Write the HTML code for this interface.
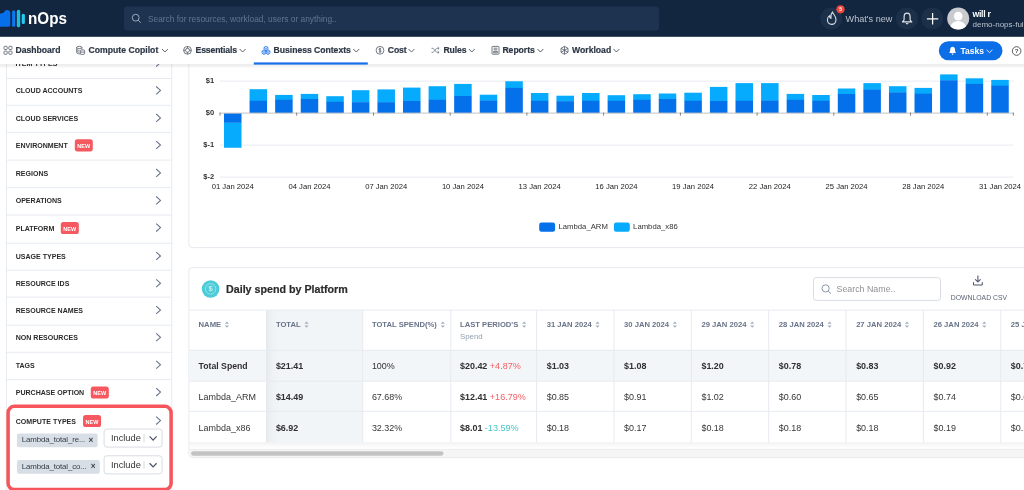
<!DOCTYPE html>
<html lang="en"><head><meta charset="utf-8"><title>nOps - Business Contexts</title>
<style>
*{box-sizing:border-box;margin:0;padding:0}
html,body{width:1024px;height:490px;overflow:hidden;background:#fff;font-family:"Liberation Sans",sans-serif;}
#root{will-change:transform;position:relative;width:1024px;height:490px;overflow:hidden;background:#fff}
#shapes{position:absolute;left:0;top:0}
.t{position:absolute;white-space:nowrap}
</style></head>
<body><div id="root">
<svg id="shapes" width="1024" height="490" viewBox="0 0 1024 490">
<rect x="5.9" y="60" width="1" height="430" fill="#e6eaef"/>
<rect x="171.3" y="60" width="1" height="430" fill="#e6eaef"/>
<rect x="6.4" y="78" width="165.4" height="1" fill="#e6eaef"/>
<path d="M0 -3.9 L4.3 0 L0 3.9" fill="none" stroke="#66738b" stroke-width="1.05" transform="translate(156.2 62.6)"/>
<rect x="6.4" y="104.8" width="165.4" height="1" fill="#e6eaef"/>
<path d="M0 -3.9 L4.3 0 L0 3.9" fill="none" stroke="#66738b" stroke-width="1.05" transform="translate(156.2 90.4)"/>
<rect x="6.4" y="131.8" width="165.4" height="1" fill="#e6eaef"/>
<path d="M0 -3.9 L4.3 0 L0 3.9" fill="none" stroke="#66738b" stroke-width="1.05" transform="translate(156.2 117.9)"/>
<rect x="6.4" y="159.6" width="165.4" height="1" fill="#e6eaef"/>
<path d="M0 -3.9 L4.3 0 L0 3.9" fill="none" stroke="#66738b" stroke-width="1.05" transform="translate(156.2 145)"/>
<rect x="74.8" y="139.3" width="18" height="12.1" fill="#f5595f" rx="2.6"/>
<rect x="6.4" y="187.2" width="165.4" height="1" fill="#e6eaef"/>
<path d="M0 -3.9 L4.3 0 L0 3.9" fill="none" stroke="#66738b" stroke-width="1.05" transform="translate(156.2 172.9)"/>
<rect x="6.4" y="214.5" width="165.4" height="1" fill="#e6eaef"/>
<path d="M0 -3.9 L4.3 0 L0 3.9" fill="none" stroke="#66738b" stroke-width="1.05" transform="translate(156.2 200.4)"/>
<rect x="6.4" y="242.7" width="165.4" height="1" fill="#e6eaef"/>
<path d="M0 -3.9 L4.3 0 L0 3.9" fill="none" stroke="#66738b" stroke-width="1.05" transform="translate(156.2 227.6)"/>
<rect x="60.8" y="221.9" width="18" height="12.1" fill="#f5595f" rx="2.6"/>
<rect x="6.4" y="269.7" width="165.4" height="1" fill="#e6eaef"/>
<path d="M0 -3.9 L4.3 0 L0 3.9" fill="none" stroke="#66738b" stroke-width="1.05" transform="translate(156.2 256)"/>
<rect x="6.4" y="296.6" width="165.4" height="1" fill="#e6eaef"/>
<path d="M0 -3.9 L4.3 0 L0 3.9" fill="none" stroke="#66738b" stroke-width="1.05" transform="translate(156.2 283.2)"/>
<rect x="6.4" y="324.7" width="165.4" height="1" fill="#e6eaef"/>
<path d="M0 -3.9 L4.3 0 L0 3.9" fill="none" stroke="#66738b" stroke-width="1.05" transform="translate(156.2 310)"/>
<rect x="6.4" y="351.8" width="165.4" height="1" fill="#e6eaef"/>
<path d="M0 -3.9 L4.3 0 L0 3.9" fill="none" stroke="#66738b" stroke-width="1.05" transform="translate(156.2 337.3)"/>
<rect x="6.4" y="379.1" width="165.4" height="1" fill="#e6eaef"/>
<path d="M0 -3.9 L4.3 0 L0 3.9" fill="none" stroke="#66738b" stroke-width="1.05" transform="translate(156.2 364.8)"/>
<path d="M0 -3.9 L4.3 0 L0 3.9" fill="none" stroke="#66738b" stroke-width="1.05" transform="translate(156.2 392.1)"/>
<rect x="90.8" y="386.4" width="18" height="12.1" fill="#f5595f" rx="2.6"/>
<path d="M0 -3.9 L4.3 0 L0 3.9" fill="none" stroke="#66738b" stroke-width="1.05" transform="translate(156.2 420.6)"/>
<rect x="83.05" y="414.9" width="18" height="12.1" fill="#f5595f" rx="2.6"/>
<rect x="8.1" y="406.35" width="163" height="83.2" fill="none" rx="6.3" stroke="#f5555b" stroke-width="3.5"/>
<rect x="17" y="433.4" width="80.6" height="13.8" fill="#d8dee6" rx="2"/>
<rect x="104.1" y="429" width="58" height="18.1" fill="#fff" rx="2.8" stroke="#d8dce3" stroke-width="1"/>
<rect x="143.55" y="434" width="0.9" height="8.1" fill="#d4d4d4"/>
<path d="M-3.5 -1.9 L0 1.7 L3.5 -1.9" fill="none" stroke="#4a5262" stroke-width="1.2" transform="translate(153.1 438.35)"/>
<rect x="17" y="460" width="82.8" height="13.8" fill="#d8dee6" rx="2"/>
<rect x="104.1" y="455.8" width="58" height="18.1" fill="#fff" rx="2.8" stroke="#d8dce3" stroke-width="1"/>
<rect x="143.55" y="460.8" width="0.9" height="8.1" fill="#d4d4d4"/>
<path d="M-3.5 -1.9 L0 1.7 L3.5 -1.9" fill="none" stroke="#4a5262" stroke-width="1.2" transform="translate(153.1 465.15)"/>
<rect x="188.9" y="50" width="900" height="197.6" fill="#fff" rx="3.5" stroke="#e6eaef" stroke-width="1"/>
<rect x="220" y="80.6" width="793.4" height="1" fill="#e9ecf4"/>
<rect x="220" y="144.6" width="793.4" height="1" fill="#e9ecf4"/>
<rect x="220" y="176.6" width="793.4" height="1" fill="#e9ecf4"/>
<rect x="224" y="122.4" width="17.5" height="25.35" fill="#06abfd"/>
<rect x="224" y="113.1" width="17.5" height="9.6" fill="#0470e9"/>
<rect x="249.57" y="89.2" width="17.5" height="11.9" fill="#06abfd"/>
<rect x="249.57" y="100.8" width="17.5" height="12.3" fill="#0470e9"/>
<rect x="275.15" y="94.9" width="17.5" height="5.2" fill="#06abfd"/>
<rect x="275.15" y="99.8" width="17.5" height="13.3" fill="#0470e9"/>
<rect x="300.73" y="93.9" width="17.5" height="5.4" fill="#06abfd"/>
<rect x="300.73" y="99" width="17.5" height="14.1" fill="#0470e9"/>
<rect x="326.3" y="96.2" width="17.5" height="5.9" fill="#06abfd"/>
<rect x="326.3" y="101.8" width="17.5" height="11.3" fill="#0470e9"/>
<rect x="351.88" y="90.2" width="17.5" height="12.3" fill="#06abfd"/>
<rect x="351.88" y="102.2" width="17.5" height="10.9" fill="#0470e9"/>
<rect x="377.45" y="89.4" width="17.5" height="13.1" fill="#06abfd"/>
<rect x="377.45" y="102.2" width="17.5" height="10.9" fill="#0470e9"/>
<rect x="403.02" y="87.6" width="17.5" height="13.7" fill="#06abfd"/>
<rect x="403.02" y="101" width="17.5" height="12.1" fill="#0470e9"/>
<rect x="428.6" y="86.2" width="17.5" height="13.9" fill="#06abfd"/>
<rect x="428.6" y="99.8" width="17.5" height="13.3" fill="#0470e9"/>
<rect x="454.17" y="83.9" width="17.5" height="12.4" fill="#06abfd"/>
<rect x="454.17" y="96" width="17.5" height="17.1" fill="#0470e9"/>
<rect x="479.75" y="94.7" width="17.5" height="6.1" fill="#06abfd"/>
<rect x="479.75" y="100.5" width="17.5" height="12.6" fill="#0470e9"/>
<rect x="505.32" y="81.25" width="17.5" height="6.95" fill="#06abfd"/>
<rect x="505.32" y="87.9" width="17.5" height="25.2" fill="#0470e9"/>
<rect x="530.9" y="93" width="17.5" height="8.1" fill="#06abfd"/>
<rect x="530.9" y="100.8" width="17.5" height="12.3" fill="#0470e9"/>
<rect x="556.47" y="95.7" width="17.5" height="5.8" fill="#06abfd"/>
<rect x="556.47" y="101.2" width="17.5" height="11.9" fill="#0470e9"/>
<rect x="582.05" y="93" width="17.5" height="8" fill="#06abfd"/>
<rect x="582.05" y="100.7" width="17.5" height="12.4" fill="#0470e9"/>
<rect x="607.62" y="95.2" width="17.5" height="5.9" fill="#06abfd"/>
<rect x="607.62" y="100.8" width="17.5" height="12.3" fill="#0470e9"/>
<rect x="633.2" y="94.2" width="17.5" height="5.9" fill="#06abfd"/>
<rect x="633.2" y="99.8" width="17.5" height="13.3" fill="#0470e9"/>
<rect x="658.77" y="93.5" width="17.5" height="5.8" fill="#06abfd"/>
<rect x="658.77" y="99" width="17.5" height="14.1" fill="#0470e9"/>
<rect x="684.35" y="92.7" width="17.5" height="8.4" fill="#06abfd"/>
<rect x="684.35" y="100.8" width="17.5" height="12.3" fill="#0470e9"/>
<rect x="709.92" y="86.9" width="17.5" height="14.4" fill="#06abfd"/>
<rect x="709.92" y="101" width="17.5" height="12.1" fill="#0470e9"/>
<rect x="735.5" y="83.1" width="17.5" height="18" fill="#06abfd"/>
<rect x="735.5" y="100.8" width="17.5" height="12.3" fill="#0470e9"/>
<rect x="761.07" y="83.1" width="17.5" height="17.7" fill="#06abfd"/>
<rect x="761.07" y="100.5" width="17.5" height="12.6" fill="#0470e9"/>
<rect x="786.65" y="93.9" width="17.5" height="6.2" fill="#06abfd"/>
<rect x="786.65" y="99.8" width="17.5" height="13.3" fill="#0470e9"/>
<rect x="812.23" y="95" width="17.5" height="6.1" fill="#06abfd"/>
<rect x="812.23" y="100.8" width="17.5" height="12.3" fill="#0470e9"/>
<rect x="837.8" y="88.5" width="17.5" height="5.8" fill="#06abfd"/>
<rect x="837.8" y="94" width="17.5" height="19.1" fill="#0470e9"/>
<rect x="863.38" y="83.1" width="17.5" height="6.8" fill="#06abfd"/>
<rect x="863.38" y="89.6" width="17.5" height="23.5" fill="#0470e9"/>
<rect x="888.95" y="86.2" width="17.5" height="6.5" fill="#06abfd"/>
<rect x="888.95" y="92.4" width="17.5" height="20.7" fill="#0470e9"/>
<rect x="914.52" y="87.9" width="17.5" height="6.1" fill="#06abfd"/>
<rect x="914.52" y="93.7" width="17.5" height="19.4" fill="#0470e9"/>
<rect x="940.1" y="74.4" width="17.5" height="6.2" fill="#06abfd"/>
<rect x="940.1" y="80.3" width="17.5" height="32.8" fill="#0470e9"/>
<rect x="965.67" y="78.3" width="17.5" height="5.9" fill="#06abfd"/>
<rect x="965.67" y="83.9" width="17.5" height="29.2" fill="#0470e9"/>
<rect x="991.25" y="79.9" width="17.5" height="6.1" fill="#06abfd"/>
<rect x="991.25" y="85.7" width="17.5" height="27.4" fill="#0470e9"/>
<rect x="219.6" y="112.6" width="794" height="1" fill="#c4c4c4"/>
<rect x="219.55" y="112.6" width="0.9" height="3.1" fill="#777"/>
<rect x="296.28" y="112.6" width="0.9" height="3.1" fill="#777"/>
<rect x="373" y="112.6" width="0.9" height="3.1" fill="#777"/>
<rect x="449.72" y="112.6" width="0.9" height="3.1" fill="#777"/>
<rect x="526.45" y="112.6" width="0.9" height="3.1" fill="#777"/>
<rect x="603.17" y="112.6" width="0.9" height="3.1" fill="#777"/>
<rect x="679.9" y="112.6" width="0.9" height="3.1" fill="#777"/>
<rect x="756.62" y="112.6" width="0.9" height="3.1" fill="#777"/>
<rect x="833.35" y="112.6" width="0.9" height="3.1" fill="#777"/>
<rect x="910.07" y="112.6" width="0.9" height="3.1" fill="#777"/>
<rect x="986.8" y="112.6" width="0.9" height="3.1" fill="#777"/>
<rect x="1012.85" y="112.6" width="0.9" height="3.1" fill="#777"/>
<rect x="539.2" y="222.5" width="15.9" height="9.2" fill="#0470e9" rx="2.3"/>
<rect x="613.9" y="222.5" width="15.9" height="9.2" fill="#06abfd" rx="2.3"/>
<rect x="188.9" y="267.6" width="900" height="190" fill="#fff" rx="3.5" stroke="#e6eaef" stroke-width="1"/>
<circle cx="210.6" cy="289" r="8.8" fill="#4ccbd9"/>
<circle cx="210.6" cy="288.9" r="5.2" fill="none" stroke="#fff" stroke-width="0.7" opacity="0.6"/>
<rect x="813.5" y="277.6" width="127" height="22.8" fill="#fff" rx="2.8" stroke="#d8dce2" stroke-width="1"/>
<g transform="translate(821.3 284.1)" fill="none" stroke="#8490a3" stroke-width="0.95"><circle cx="4.3" cy="4.3" r="3.6"/><path d="M6.9 6.9 L9.6 9.6"/></g>
<g transform="translate(972.9 275.3)" fill="none" stroke="#4a5568" stroke-width="1.05" stroke-linecap="round" stroke-linejoin="round"><path d="M5 0.6 V6.6 M2.6 4.3 L5 6.7 L7.4 4.3 M0.6 7.2 V9.2 Q0.6 9.8 1.2 9.8 H8.8 Q9.4 9.8 9.4 9.2 V7.2"/></g>
<rect x="189.4" y="350.3" width="900" height="30.9" fill="#f3f6f9"/>
<defs><linearGradient id="tg" x1="0" x2="1" y1="0" y2="0"><stop offset="0" stop-color="#e4e8ec"/><stop offset="0.03" stop-color="#eaedf1"/><stop offset="0.08" stop-color="#f0f3f6"/><stop offset="0.14" stop-color="#f2f5f8"/><stop offset="1" stop-color="#f2f5f8"/></linearGradient></defs>
<rect x="266" y="310.1" width="96.7" height="132.1" fill="url(#tg)"/>
<rect x="189.4" y="309.6" width="910.6" height="1" fill="#e6eaef"/>
<rect x="189.4" y="349.8" width="910.6" height="1" fill="#e6eaef"/>
<rect x="189.4" y="380.7" width="910.6" height="1" fill="#e6eaef"/>
<rect x="189.4" y="410.8" width="910.6" height="1" fill="#e6eaef"/>
<rect x="362.2" y="310.1" width="1" height="132.1" fill="#e6eaef"/>
<rect x="450.3" y="310.1" width="1" height="132.1" fill="#e6eaef"/>
<rect x="536.1" y="310.1" width="1" height="132.1" fill="#e6eaef"/>
<rect x="613.46" y="310.1" width="1" height="132.1" fill="#e6eaef"/>
<rect x="690.82" y="310.1" width="1" height="132.1" fill="#e6eaef"/>
<rect x="768.18" y="310.1" width="1" height="132.1" fill="#e6eaef"/>
<rect x="845.54" y="310.1" width="1" height="132.1" fill="#e6eaef"/>
<rect x="922.9" y="310.1" width="1" height="132.1" fill="#e6eaef"/>
<rect x="1000.26" y="310.1" width="1" height="132.1" fill="#e6eaef"/>
<rect x="1077.62" y="310.1" width="1" height="132.1" fill="#e6eaef"/>
<path d="M0 -0.8 L2.1 -3.1 L4.2 -0.8 Z M0 0.8 L2.1 3.1 L4.2 0.8 Z" fill="#a6afbe" transform="translate(224.8 324.6)"/>
<path d="M0 -0.8 L2.1 -3.1 L4.2 -0.8 Z M0 0.8 L2.1 3.1 L4.2 0.8 Z" fill="#a6afbe" transform="translate(304.4 324.6)"/>
<path d="M0 -0.8 L2.1 -3.1 L4.2 -0.8 Z M0 0.8 L2.1 3.1 L4.2 0.8 Z" fill="#a6afbe" transform="translate(440.7 324.6)"/>
<path d="M0 -0.8 L2.1 -3.1 L4.2 -0.8 Z M0 0.8 L2.1 3.1 L4.2 0.8 Z" fill="#a6afbe" transform="translate(522.1 324.6)"/>
<path d="M0 -0.8 L2.1 -3.1 L4.2 -0.8 Z M0 0.8 L2.1 3.1 L4.2 0.8 Z" fill="#a6afbe" transform="translate(595.4 324.6)"/>
<path d="M0 -0.8 L2.1 -3.1 L4.2 -0.8 Z M0 0.8 L2.1 3.1 L4.2 0.8 Z" fill="#a6afbe" transform="translate(672.76 324.6)"/>
<path d="M0 -0.8 L2.1 -3.1 L4.2 -0.8 Z M0 0.8 L2.1 3.1 L4.2 0.8 Z" fill="#a6afbe" transform="translate(750.12 324.6)"/>
<path d="M0 -0.8 L2.1 -3.1 L4.2 -0.8 Z M0 0.8 L2.1 3.1 L4.2 0.8 Z" fill="#a6afbe" transform="translate(827.48 324.6)"/>
<path d="M0 -0.8 L2.1 -3.1 L4.2 -0.8 Z M0 0.8 L2.1 3.1 L4.2 0.8 Z" fill="#a6afbe" transform="translate(904.84 324.6)"/>
<path d="M0 -0.8 L2.1 -3.1 L4.2 -0.8 Z M0 0.8 L2.1 3.1 L4.2 0.8 Z" fill="#a6afbe" transform="translate(982.2 324.6)"/>
<path d="M0 -0.8 L2.1 -3.1 L4.2 -0.8 Z M0 0.8 L2.1 3.1 L4.2 0.8 Z" fill="#a6afbe" transform="translate(1059.56 324.6)"/>
<defs><linearGradient id="bs" x1="0" x2="0" y1="0" y2="1"><stop offset="0" stop-color="#000" stop-opacity="0.05"/><stop offset="1" stop-color="#000" stop-opacity="0"/></linearGradient></defs>
<rect x="189.4" y="442.2" width="900" height="6.2" fill="url(#bs)"/>
<rect x="189.4" y="449.4" width="900" height="7.7" fill="#f5f5f5"/>
<rect x="189.4" y="448.9" width="910.6" height="1" fill="#ececec"/>
<rect x="191.1" y="451.2" width="252.3" height="4.5" fill="#c3c3c3" rx="2.25"/>
<defs><linearGradient id="ns" x1="0" x2="0" y1="0" y2="1"><stop offset="0" stop-color="#000" stop-opacity="0.09"/><stop offset="1" stop-color="#000" stop-opacity="0"/></linearGradient></defs>
<rect x="0" y="64.1" width="1024" height="4.5" fill="url(#ns)"/>
<rect x="0" y="37" width="1024" height="27.1" fill="#fff"/>
<path d="M0 0 L2.95 3 L5.9 0" fill="none" stroke="#4a5260" stroke-width="0.9" transform="translate(161.95 49)"/>
<path d="M0 0 L2.95 3 L5.9 0" fill="none" stroke="#4a5260" stroke-width="0.9" transform="translate(239.65 49)"/>
<path d="M0 0 L2.95 3 L5.9 0" fill="none" stroke="#4a5260" stroke-width="0.9" transform="translate(353.35 49)"/>
<path d="M0 0 L2.95 3 L5.9 0" fill="none" stroke="#4a5260" stroke-width="0.9" transform="translate(408.55 49)"/>
<path d="M0 0 L2.95 3 L5.9 0" fill="none" stroke="#4a5260" stroke-width="0.9" transform="translate(468.85 49)"/>
<path d="M0 0 L2.95 3 L5.9 0" fill="none" stroke="#4a5260" stroke-width="0.9" transform="translate(537.45 49)"/>
<path d="M0 0 L2.95 3 L5.9 0" fill="none" stroke="#4a5260" stroke-width="0.9" transform="translate(613.45 49)"/>
<rect x="253.8" y="62.4" width="114" height="2.2" fill="#1670ea"/>
<g transform="translate(3.5 45.8)" fill="none" stroke="#525a66" stroke-width="0.8"><rect x="0.5" y="0.5" width="3.2" height="3.2" rx="0.8"/><rect x="5.3" y="0.5" width="3.2" height="3.2" rx="0.8"/><rect x="0.5" y="5.3" width="3.2" height="3.2" rx="0.8"/><rect x="5.3" y="5.3" width="3.2" height="3.2" rx="0.8"/></g>
<g transform="translate(76 45.8)" fill="none" stroke="#525a66" stroke-width="0.8"><ellipse cx="3.3" cy="1.6" rx="2.6" ry="1.1"/><path d="M0.7 1.6 V6.8 C0.7 7.5 1.8 8 3.3 8 H4.4 M5.9 1.6 V3.8 M0.7 3.6 C1 4.3 2.2 4.6 3.6 4.5 M0.7 5.4 C1 6.1 2.2 6.4 3.6 6.3"/><rect x="4.4" y="4.2" width="4.2" height="4.4" rx="0.8"/><path d="M5.8 5.6 V7.2 M7.2 5.6 V7.2"/></g>
<g transform="translate(183 45.8)" fill="none" stroke="#525a66" stroke-width="0.8"><circle cx="4.5" cy="4.5" r="3.9"/><circle cx="4.5" cy="4.5" r="2"/><path d="M4.5 0.6 V2.5 M4.5 6.5 V8.4 M0.6 4.5 H2.5 M6.5 4.5 H8.4"/></g>
<g transform="translate(261.3 45.8)" fill="none" stroke="#2a7bee" stroke-width="0.8"><path d="M4.7 0.5 L6.7 1.6 V3.8 L4.7 4.9 L2.7 3.8 V1.6 Z M2.7 4.2 L4.7 5.3 V7.5 L2.7 8.6 L0.7 7.5 V5.3 Z M6.7 4.2 L8.7 5.3 V7.5 L6.7 8.6 L4.7 7.5 V5.3 Z M2.7 1.6 L4.7 2.7 L6.7 1.6 M4.7 2.7 V4.9 M0.7 5.3 L2.7 6.4 L4.7 5.3 L6.7 6.4 L8.7 5.3 M2.7 6.4 V8.6 M6.7 6.4 V8.6"/></g>
<g transform="translate(375.5 45.8)" fill="none" stroke="#525a66" stroke-width="0.8"><circle cx="4.5" cy="4.5" r="3.9"/><path d="M4.5 2 V7 M5.6 3.2 C5.2 2.6 3.5 2.6 3.5 3.6 C3.5 4.6 5.6 4.3 5.6 5.4 C5.6 6.4 3.8 6.4 3.4 5.8"/></g>
<g transform="translate(431 45.8)" fill="none" stroke="#6f7886" stroke-width="0.8"><path d="M0.5 2.5 H2.2 L5.6 6.5 H8 M0.5 6.5 H2.2 L5.6 2.5 H8 M6.8 1.3 L8.1 2.5 L6.8 3.7 M6.8 5.3 L8.1 6.5 L6.8 7.7"/></g>
<g transform="translate(491 45.8)" fill="none" stroke="#525a66" stroke-width="0.8"><rect x="1" y="0.6" width="7" height="7.8" rx="0.6"/><path d="M2.6 2.4 H6.4 M2.6 4 H6.4 M2.6 5.6 H6.4 V7 H2.6 Z"/></g>
<g transform="translate(560 45.8)" fill="none" stroke="#525a66" stroke-width="0.8"><path d="M4.5 0.5 L8 2.5 V6.5 L4.5 8.5 L1 6.5 V2.5 Z M4.5 0.5 V8.5 M1 2.5 L8 6.5 M8 2.5 L1 6.5"/></g>
<rect x="938.8" y="41.2" width="63.7" height="19.1" fill="#0c6fe8" rx="9.55"/>
<path d="M3.5 0.2 C1.8 0.2 1.1 1.6 1.1 3.1 C1.1 4.9 0.7 5.6 0.1 6.4 H6.9 C6.3 5.6 5.9 4.9 5.9 3.1 C5.9 1.6 5.2 0.2 3.5 0.2 Z M2.5 7 C2.6 7.9 3 8.3 3.5 8.3 C4 8.3 4.4 7.9 4.5 7 Z" fill="#fff" transform="translate(949.1 46.5)"/>
<path d="M0 0 L2.9 2.9 L5.8 0" fill="none" stroke="#fff" stroke-width="0.85" transform="translate(986.6 49.8)"/>
<circle cx="1016.6" cy="51" r="4.3" fill="none" stroke="#444" stroke-width="0.85"/>
<rect x="0" y="0" width="1024" height="36.8" fill="#12263f"/>
<path d="M0 13.7 C0.9 13.1 2.4 13 3.7 12.7 C4.1 11 5.5 9.9 7.2 9.9 C9 9.9 10.3 11 10.3 12.8 V24.8 C10.3 26 9.5 26.8 8.3 26.8 H0 Z" fill="#066fea"/><rect x="12.1" y="10.6" width="3.1" height="16.2" rx="1.4" fill="#0a7af3"/><rect x="16.8" y="9.8" width="3.4" height="17.5" rx="1.6" fill="#1fbde4"/><rect x="21.7" y="13.7" width="3.2" height="10.2" rx="1.5" fill="#23cbee"/>
<rect x="124" y="6.6" width="535" height="24" fill="#1e3350" rx="3"/>
<g transform="translate(131.5 13.5)" fill="none" stroke="#a9b6c8" stroke-width="0.9"><circle cx="4.2" cy="4.2" r="3.4"/><path d="M6.7 6.7 L9.3 9.3"/></g>
<circle cx="831.2" cy="18.5" r="11" fill="#1c3049"/>
<circle cx="907" cy="18.5" r="11" fill="#1c3049"/>
<circle cx="932.2" cy="18.5" r="11" fill="#1c3049"/>
<path d="M5.8 0.7 C6.2 3 9.3 4.6 9.3 8.4 C9.3 11.2 7.4 13.2 5 13.2 C2.6 13.2 0.7 11.3 0.7 8.6 C0.7 6.6 1.7 5.2 2.8 4.4 C2.8 5.8 3.4 6.8 4.3 7.2 C4 4.8 4.4 2.4 5.8 0.7 Z" fill="none" stroke="#d9dde3" stroke-width="1.1" transform="translate(826.7 11.2)" stroke-linejoin="round"/>
<circle cx="840.5" cy="9.3" r="4.1" fill="#f0473e"/>
<path d="M5.5 1.1 C3.3 1.1 2.5 2.9 2.5 4.9 V7.6 C2.5 8.7 1.7 9.2 0.8 9.9 H10.2 C9.3 9.2 8.5 8.7 8.5 7.6 V4.9 C8.5 2.9 7.7 1.1 5.5 1.1 Z M4.6 11 C4.7 11.7 5 12 5.5 12 C6 12 6.3 11.7 6.4 11" fill="none" stroke="#e4e7eb" stroke-width="1.15" transform="translate(901.6 12)" stroke-linejoin="round"/>
<path d="M5.8 0.1 V11.5 M0.1 5.8 H11.5" fill="none" stroke="#fff" stroke-width="1.25" transform="translate(926.8 13)"/>
<g transform="translate(947.2 7.5)"><clipPath id="av"><circle cx="11" cy="11" r="11"/></clipPath><circle cx="11" cy="11" r="11" fill="#c9cbce"/><g clip-path="url(#av)" fill="#fff"><circle cx="11" cy="8.6" r="4.3"/><ellipse cx="11" cy="20.5" rx="8" ry="7"/></g></g>
</svg>
<div style="position:absolute;left:0;top:64px;width:180px;height:20px;overflow:hidden"><div class="t" style="left:15.6px;top:-5.00px;font-size:7.05px;line-height:10px;color:#2b2b2b;font-weight:700">ITEM TYPES</div></div>
<div class="t" style="left:15.70px;top:86.00px;font-size:7.05px;line-height:10px;color:#2b2b2b;font-weight:700;">CLOUD ACCOUNTS</div>
<div class="t" style="left:15.70px;top:114.00px;font-size:7.05px;line-height:10px;color:#2b2b2b;font-weight:700;">CLOUD SERVICES</div>
<div class="t" style="left:15.70px;top:141.00px;font-size:7.05px;line-height:10px;color:#2b2b2b;font-weight:700;">ENVIRONMENT</div>
<div class="t" style="left:77.30px;top:141.90px;font-size:5.5px;line-height:8px;color:#fff;font-weight:700;">NEW</div>
<div class="t" style="left:15.70px;top:169.00px;font-size:7.05px;line-height:10px;color:#2b2b2b;font-weight:700;">REGIONS</div>
<div class="t" style="left:15.70px;top:196.00px;font-size:7.05px;line-height:10px;color:#2b2b2b;font-weight:700;">OPERATIONS</div>
<div class="t" style="left:15.70px;top:224.00px;font-size:7.05px;line-height:10px;color:#2b2b2b;font-weight:700;">PLATFORM</div>
<div class="t" style="left:63.30px;top:224.90px;font-size:5.5px;line-height:8px;color:#fff;font-weight:700;">NEW</div>
<div class="t" style="left:15.70px;top:252.00px;font-size:7.05px;line-height:10px;color:#2b2b2b;font-weight:700;">USAGE TYPES</div>
<div class="t" style="left:15.70px;top:279.00px;font-size:7.05px;line-height:10px;color:#2b2b2b;font-weight:700;">RESOURCE IDS</div>
<div class="t" style="left:15.70px;top:306.00px;font-size:7.05px;line-height:10px;color:#2b2b2b;font-weight:700;">RESOURCE NAMES</div>
<div class="t" style="left:15.70px;top:333.00px;font-size:7.05px;line-height:10px;color:#2b2b2b;font-weight:700;">NON RESOURCES</div>
<div class="t" style="left:15.70px;top:361.00px;font-size:7.05px;line-height:10px;color:#2b2b2b;font-weight:700;">TAGS</div>
<div class="t" style="left:15.70px;top:388.00px;font-size:7.05px;line-height:10px;color:#2b2b2b;font-weight:700;">PURCHASE OPTION</div>
<div class="t" style="left:93.30px;top:388.90px;font-size:5.5px;line-height:8px;color:#fff;font-weight:700;">NEW</div>
<div class="t" style="left:15.70px;top:417.00px;font-size:7.05px;line-height:10px;color:#2b2b2b;font-weight:700;">COMPUTE TYPES</div>
<div class="t" style="left:85.55px;top:417.90px;font-size:5.5px;line-height:8px;color:#fff;font-weight:700;">NEW</div>
<div class="t" style="left:21.80px;top:435.40px;font-size:7.9px;line-height:10px;color:#363c47;font-weight:400;letter-spacing:-0.14px">Lambda_total_re...</div>
<div class="t" style="left:88.60px;top:435.60px;font-size:8.2px;line-height:10px;color:#3a3f48;font-weight:700;">×</div>
<div class="t" style="left:110.90px;top:431.85px;font-size:9.3px;line-height:12px;color:#333;font-weight:400;">Include</div>
<div class="t" style="left:21.80px;top:462.00px;font-size:7.9px;line-height:10px;color:#363c47;font-weight:400;letter-spacing:-0.14px">Lambda_total_co...</div>
<div class="t" style="left:90.80px;top:462.20px;font-size:8.2px;line-height:10px;color:#3a3f48;font-weight:700;">×</div>
<div class="t" style="left:110.90px;top:458.65px;font-size:9.3px;line-height:12px;color:#333;font-weight:400;">Include</div>
<div class="t" style="left:194.20px;top:75.80px;font-size:7.5px;line-height:10px;color:#333;font-weight:700;width:20px;text-align:right;">$1</div>
<div class="t" style="left:194.20px;top:107.80px;font-size:7.5px;line-height:10px;color:#333;font-weight:700;width:20px;text-align:right;">$0</div>
<div class="t" style="left:194.20px;top:139.80px;font-size:7.5px;line-height:10px;color:#333;font-weight:700;width:20px;text-align:right;">$-1</div>
<div class="t" style="left:194.20px;top:171.80px;font-size:7.5px;line-height:10px;color:#333;font-weight:700;width:20px;text-align:right;">$-2</div>
<div class="t" style="left:202.75px;top:181.60px;font-size:7.65px;line-height:10px;color:#1c1c1c;font-weight:400;width:60px;text-align:center">01 Jan 2024</div>
<div class="t" style="left:279.48px;top:181.60px;font-size:7.65px;line-height:10px;color:#1c1c1c;font-weight:400;width:60px;text-align:center">04 Jan 2024</div>
<div class="t" style="left:356.20px;top:181.60px;font-size:7.65px;line-height:10px;color:#1c1c1c;font-weight:400;width:60px;text-align:center">07 Jan 2024</div>
<div class="t" style="left:432.92px;top:181.60px;font-size:7.65px;line-height:10px;color:#1c1c1c;font-weight:400;width:60px;text-align:center">10 Jan 2024</div>
<div class="t" style="left:509.65px;top:181.60px;font-size:7.65px;line-height:10px;color:#1c1c1c;font-weight:400;width:60px;text-align:center">13 Jan 2024</div>
<div class="t" style="left:586.38px;top:181.60px;font-size:7.65px;line-height:10px;color:#1c1c1c;font-weight:400;width:60px;text-align:center">16 Jan 2024</div>
<div class="t" style="left:663.10px;top:181.60px;font-size:7.65px;line-height:10px;color:#1c1c1c;font-weight:400;width:60px;text-align:center">19 Jan 2024</div>
<div class="t" style="left:739.82px;top:181.60px;font-size:7.65px;line-height:10px;color:#1c1c1c;font-weight:400;width:60px;text-align:center">22 Jan 2024</div>
<div class="t" style="left:816.55px;top:181.60px;font-size:7.65px;line-height:10px;color:#1c1c1c;font-weight:400;width:60px;text-align:center">25 Jan 2024</div>
<div class="t" style="left:893.27px;top:181.60px;font-size:7.65px;line-height:10px;color:#1c1c1c;font-weight:400;width:60px;text-align:center">28 Jan 2024</div>
<div class="t" style="left:970.00px;top:181.60px;font-size:7.65px;line-height:10px;color:#1c1c1c;font-weight:400;width:60px;text-align:center">31 Jan 2024</div>
<div class="t" style="left:558.50px;top:222.40px;font-size:7.72px;line-height:10px;color:#333;font-weight:400;">Lambda_ARM</div>
<div class="t" style="left:633.10px;top:222.40px;font-size:7.72px;line-height:10px;color:#333;font-weight:400;">Lambda_x86</div>
<div class="t" style="left:208.55px;top:284.30px;font-size:7.6px;line-height:10px;color:rgba(255,255,255,0.85);font-weight:400;">$</div>
<div class="t" style="left:226.00px;top:282.00px;font-size:10.7px;line-height:14px;color:#2b2b2b;font-weight:700;-webkit-text-stroke:0.2px #2b2b2b">Daily spend by Platform</div>
<div class="t" style="left:836.50px;top:283.20px;font-size:8.85px;line-height:12px;color:#8f9297;font-weight:400;">Search Name..</div>
<div class="t" style="left:950.70px;top:292.90px;font-size:6.87px;line-height:10px;color:#5a6474;font-weight:400;">DOWNLOAD CSV</div>
<div class="t" style="left:198.60px;top:319.50px;font-size:7.65px;line-height:10px;color:#687389;font-weight:700;">NAME</div>
<div class="t" style="left:275.90px;top:319.50px;font-size:7.65px;line-height:10px;color:#687389;font-weight:700;">TOTAL</div>
<div class="t" style="left:371.90px;top:319.50px;font-size:7.65px;line-height:10px;color:#687389;font-weight:700;">TOTAL SPEND(%)</div>
<div class="t" style="left:460.00px;top:319.50px;font-size:7.65px;line-height:10px;color:#687389;font-weight:700;">LAST PERIOD'S</div>
<div class="t" style="left:460.00px;top:331.80px;font-size:7.85px;line-height:10px;color:#94a0b3;font-weight:400;">Spend</div>
<div class="t" style="left:546.70px;top:319.50px;font-size:7.65px;line-height:10px;color:#687389;font-weight:700;">31 JAN 2024</div>
<div class="t" style="left:624.06px;top:319.50px;font-size:7.65px;line-height:10px;color:#687389;font-weight:700;">30 JAN 2024</div>
<div class="t" style="left:701.42px;top:319.50px;font-size:7.65px;line-height:10px;color:#687389;font-weight:700;">29 JAN 2024</div>
<div class="t" style="left:778.78px;top:319.50px;font-size:7.65px;line-height:10px;color:#687389;font-weight:700;">28 JAN 2024</div>
<div class="t" style="left:856.14px;top:319.50px;font-size:7.65px;line-height:10px;color:#687389;font-weight:700;">27 JAN 2024</div>
<div class="t" style="left:933.50px;top:319.50px;font-size:7.65px;line-height:10px;color:#687389;font-weight:700;">26 JAN 2024</div>
<div class="t" style="left:1010.86px;top:319.50px;font-size:7.65px;line-height:10px;color:#687389;font-weight:700;">25 JAN 2024</div>
<div class="t" style="left:198.60px;top:360.00px;font-size:8.7px;line-height:12px;color:#303030;font-weight:700;">Total Spend</div>
<div class="t" style="left:275.90px;top:360.00px;font-size:8.95px;line-height:12px;color:#303030;font-weight:700;">$21.41</div>
<div class="t" style="left:371.90px;top:360.00px;font-size:8.95px;line-height:12px;color:#303030;font-weight:400;">100%</div>
<div class="t" style="left:460.00px;top:360.00px;font-size:8.95px;line-height:12px;color:#303030;font-weight:700;">$20.42 <span style="font-weight:400;color:#f25e63;font-size:9.05px">+4.87%</span></div>
<div class="t" style="left:546.70px;top:360.00px;font-size:8.95px;line-height:12px;color:#303030;font-weight:700;">$1.03</div>
<div class="t" style="left:624.06px;top:360.00px;font-size:8.95px;line-height:12px;color:#303030;font-weight:700;">$1.08</div>
<div class="t" style="left:701.42px;top:360.00px;font-size:8.95px;line-height:12px;color:#303030;font-weight:700;">$1.20</div>
<div class="t" style="left:778.78px;top:360.00px;font-size:8.95px;line-height:12px;color:#303030;font-weight:700;">$0.78</div>
<div class="t" style="left:856.14px;top:360.00px;font-size:8.95px;line-height:12px;color:#303030;font-weight:700;">$0.83</div>
<div class="t" style="left:933.50px;top:360.00px;font-size:8.95px;line-height:12px;color:#303030;font-weight:700;">$0.92</div>
<div class="t" style="left:1010.86px;top:360.00px;font-size:8.95px;line-height:12px;color:#303030;font-weight:700;">$0.79</div>
<div class="t" style="left:198.60px;top:391.00px;font-size:8.97px;line-height:12px;color:#363636;font-weight:400;">Lambda_ARM</div>
<div class="t" style="left:275.90px;top:391.00px;font-size:8.95px;line-height:12px;color:#303030;font-weight:700;">$14.49</div>
<div class="t" style="left:371.90px;top:391.00px;font-size:8.95px;line-height:12px;color:#363636;font-weight:400;">67.68%</div>
<div class="t" style="left:460.00px;top:391.00px;font-size:8.95px;line-height:12px;color:#303030;font-weight:700;">$12.41 <span style="font-weight:400;color:#f25e63;font-size:9.05px">+16.79%</span></div>
<div class="t" style="left:546.70px;top:391.00px;font-size:8.95px;line-height:12px;color:#363636;font-weight:400;">$0.85</div>
<div class="t" style="left:624.06px;top:391.00px;font-size:8.95px;line-height:12px;color:#363636;font-weight:400;">$0.91</div>
<div class="t" style="left:701.42px;top:391.00px;font-size:8.95px;line-height:12px;color:#363636;font-weight:400;">$1.02</div>
<div class="t" style="left:778.78px;top:391.00px;font-size:8.95px;line-height:12px;color:#363636;font-weight:400;">$0.60</div>
<div class="t" style="left:856.14px;top:391.00px;font-size:8.95px;line-height:12px;color:#363636;font-weight:400;">$0.65</div>
<div class="t" style="left:933.50px;top:391.00px;font-size:8.95px;line-height:12px;color:#363636;font-weight:400;">$0.74</div>
<div class="t" style="left:1010.86px;top:391.00px;font-size:8.95px;line-height:12px;color:#363636;font-weight:400;">$0.61</div>
<div class="t" style="left:198.60px;top:421.60px;font-size:8.97px;line-height:12px;color:#363636;font-weight:400;">Lambda_x86</div>
<div class="t" style="left:275.90px;top:421.60px;font-size:8.95px;line-height:12px;color:#303030;font-weight:700;">$6.92</div>
<div class="t" style="left:371.90px;top:421.60px;font-size:8.95px;line-height:12px;color:#363636;font-weight:400;">32.32%</div>
<div class="t" style="left:460.00px;top:421.60px;font-size:8.95px;line-height:12px;color:#303030;font-weight:700;">$8.01 <span style="font-weight:400;color:#44c6c5;font-size:9.05px">-13.59%</span></div>
<div class="t" style="left:546.70px;top:421.60px;font-size:8.95px;line-height:12px;color:#363636;font-weight:400;">$0.18</div>
<div class="t" style="left:624.06px;top:421.60px;font-size:8.95px;line-height:12px;color:#363636;font-weight:400;">$0.17</div>
<div class="t" style="left:701.42px;top:421.60px;font-size:8.95px;line-height:12px;color:#363636;font-weight:400;">$0.18</div>
<div class="t" style="left:778.78px;top:421.60px;font-size:8.95px;line-height:12px;color:#363636;font-weight:400;">$0.18</div>
<div class="t" style="left:856.14px;top:421.60px;font-size:8.95px;line-height:12px;color:#363636;font-weight:400;">$0.18</div>
<div class="t" style="left:933.50px;top:421.60px;font-size:8.95px;line-height:12px;color:#363636;font-weight:400;">$0.19</div>
<div class="t" style="left:1010.86px;top:421.60px;font-size:8.95px;line-height:12px;color:#363636;font-weight:400;">$0.18</div>
<div class="t" style="left:15.60px;top:44.20px;font-size:8.65px;line-height:12px;color:#2d3745;font-weight:700;letter-spacing:-0.021px;-webkit-text-stroke:0.2px #2d3745">Dashboard</div>
<div class="t" style="left:88.50px;top:44.20px;font-size:8.65px;line-height:12px;color:#2d3745;font-weight:700;letter-spacing:0.021px;-webkit-text-stroke:0.2px #2d3745">Compute Copilot</div>
<div class="t" style="left:195.50px;top:44.20px;font-size:8.65px;line-height:12px;color:#2d3745;font-weight:700;letter-spacing:-0.123px;-webkit-text-stroke:0.2px #2d3745">Essentials</div>
<div class="t" style="left:273.60px;top:44.20px;font-size:8.65px;line-height:12px;color:#2d3745;font-weight:700;letter-spacing:-0.028px;-webkit-text-stroke:0.2px #2d3745">Business Contexts</div>
<div class="t" style="left:387.80px;top:44.20px;font-size:8.65px;line-height:12px;color:#2d3745;font-weight:700;letter-spacing:-0.113px;-webkit-text-stroke:0.2px #2d3745">Cost</div>
<div class="t" style="left:443.50px;top:44.20px;font-size:8.65px;line-height:12px;color:#2d3745;font-weight:700;letter-spacing:-0.108px;-webkit-text-stroke:0.2px #2d3745">Rules</div>
<div class="t" style="left:502.40px;top:44.20px;font-size:8.65px;line-height:12px;color:#2d3745;font-weight:700;letter-spacing:-0.020px;-webkit-text-stroke:0.2px #2d3745">Reports</div>
<div class="t" style="left:572.00px;top:44.20px;font-size:8.65px;line-height:12px;color:#2d3745;font-weight:700;letter-spacing:0.007px;-webkit-text-stroke:0.2px #2d3745">Workload</div>
<div class="t" style="left:960.40px;top:44.70px;font-size:8.5px;line-height:12px;color:#fff;font-weight:700;">Tasks</div>
<div class="t" style="left:1014.80px;top:47.20px;font-size:6.2px;line-height:8px;color:#444;font-weight:700;">?</div>
<div class="t" style="left:28.20px;top:8.60px;font-size:16.6px;line-height:20px;color:#fff;font-weight:700;transform:scaleX(0.92);transform-origin:0 50%">nOps</div>
<div class="t" style="left:148.00px;top:12.60px;font-size:8.35px;line-height:12px;color:#62748f;font-weight:400;">Search for resources, workload, users or anything..</div>
<div class="t" style="left:839.20px;top:6.30px;font-size:5px;line-height:6px;color:#fff;font-weight:700;">5</div>
<div class="t" style="left:845.60px;top:12.80px;font-size:9.1px;line-height:12px;color:#bbc3ce;font-weight:400;">What's new</div>
<div class="t" style="left:972.50px;top:8.00px;font-size:8.7px;line-height:12px;color:#fff;font-weight:700;letter-spacing:-0.3px">will r</div>
<div class="t" style="left:972.50px;top:19.60px;font-size:8px;line-height:10px;color:#b8c1cd;font-weight:400;">demo-nops-full</div>
</div></body></html>
